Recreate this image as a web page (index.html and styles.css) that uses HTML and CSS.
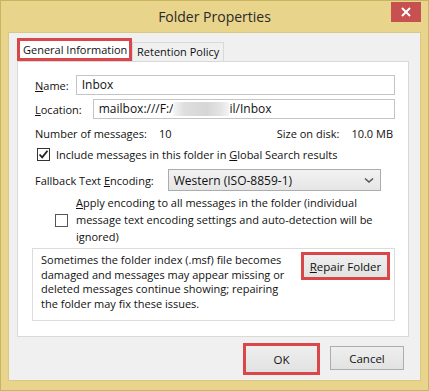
FILE: index.html
```html
<!DOCTYPE html>
<html>
<head>
<meta charset="utf-8">
<link rel="stylesheet" href="styles.css">
</head>
<body>
<div class="window">
  <div class="titlebar">
    <div class="title-spacer"></div>
    <div class="title">Folder Properties</div>
    <div class="close">
      <svg width="12" height="10" viewBox="0 0 12 10"><path d="M2 1 L10 9 M10 1 L2 9" stroke="#fff" stroke-width="2" fill="none"/></svg>
    </div>
  </div>
  <div class="client">
    <div class="tabs">
      <div class="tab tab-active">General Information</div>
      <div class="tab">Retention Policy</div>
    </div>
    <div class="panel">
      <div class="row field-row">
        <span class="label"><u>N</u>ame:</span>
        <div class="input input-name">Inbox</div>
      </div>
      <div class="row field-row loc-row">
        <span class="label"><u>L</u>ocation:</span>
        <div class="input input-loc">mailbox:///F:/<span class="blur"></span>il/Inbox</div>
      </div>
      <div class="row info-row">
        <span class="info-left">Number of messages:<span class="val">10</span></span>
        <span class="info-right">Size on disk:<span class="val">10.0 MB</span></span>
      </div>
      <div class="row check-row">
        <span class="check checked">
          <svg width="11" height="11" viewBox="0 0 11 11"><path d="M1.5 5.5 L4.2 8.3 L9.5 1.8" stroke="#222" stroke-width="1.8" fill="none"/></svg>
        </span>
        <span>Include messages in this folder in <u>G</u>lobal Search results</span>
      </div>
      <div class="row enc-row">
        <span class="label">Fallback Text <u>E</u>ncoding:</span>
        <div class="select">
          <span>Western (ISO-8859-1)</span>
          <svg width="10" height="7" viewBox="0 0 10 7"><path d="M1 1.5 L5 5 L9 1.5" stroke="#555" stroke-width="1.6" fill="none"/></svg>
        </div>
      </div>
      <div class="row apply-row">
        <span class="check"></span>
        <span class="apply-text"><u>A</u>pply encoding to all messages in the folder (individual message text encoding settings and auto-detection will be ignored)</span>
      </div>
      <div class="repair-box">
        <div class="repair-text">Sometimes the folder index (.msf) file becomes damaged and messages may appear missing or deleted messages continue showing; repairing the folder may fix these issues.</div>
        <div class="btn btn-repair marked"><u>R</u>epair Folder</div>
      </div>
    </div>
    <div class="buttons">
      <div class="btn btn-ok marked">OK</div>
      <div class="btn btn-cancel">Cancel</div>
    </div>
  </div>
</div>
</body>
</html>
```
FILE: styles.css
```css
* { box-sizing: border-box; }
html, body { margin: 0; padding: 0; }
body {
  width: 429px; height: 391px; overflow: hidden;
  font-family: "Open Sans", "Noto Sans", sans-serif;
  font-size: 11px;
  color: #111;
}
u { text-decoration: underline; text-underline-offset: 1px; }
.window {
  width: 429px; height: 391px;
  background: #e8d48a;
  border: 1px solid #c9b45f;
  display: flex; flex-direction: column;
}
.titlebar {
  height: 31px;
  display: grid;
  grid-template-columns: 1fr auto 1fr;
  align-items: start;
}
.title {
  font-size: 14px;
  color: #2a2a2a;
  padding-top: 6px;
}
.close {
  justify-self: end;
  margin-right: 7px;
  margin-top: 1px;
  width: 30px; height: 20px;
  background: #c75050;
  display: flex; align-items: center; justify-content: center;
}
.client {
  margin: 0 7px;
  height: 349px;
  background: #f0f0f0;
  border: 1px solid #d8c888;
  padding: 5px 11px 0 8px;
  display: flex; flex-direction: column;
}
.tabs { display: flex; align-items: flex-end; height: 23px; }
.tab {
  height: 19px;
  padding: 0 4px;
  line-height: 18px;
  border: 1px solid #d9d9d9;
  border-bottom: none;
  background: #f0f0f0;
  white-space: nowrap;
}
.tab-active {
  height: 23px;
  line-height: 22px;
  background: #fff;
  width: 115px;
  outline: 3px solid #d9474a;
  outline-offset: -3px;
  padding-left: 5px;
  position: relative;
  z-index: 1;
}
.panel {
  background: #fff;
  border: 1px solid #d9d9d9;
  height: 276px;
  padding: 13px 13px 0 17px;
  display: flex; flex-direction: column;
}
.row { display: flex; align-items: center; }
.field-row { height: 20px; }
.loc-row { margin-top: 4px; }
.label { margin-right: 7px; white-space: nowrap; }
.input {
  flex: 1;
  height: 20px;
  border: 1px solid #c4c4c4;
  background: #fff;
  padding-left: 5px;
  line-height: 18px;
  white-space: nowrap;
  overflow: hidden;
  font-size: 12px;
}
.input-loc { margin-left: 4px; }
.blur {
  display: inline-block;
  width: 56px; height: 14px;
  vertical-align: -3px;
  background: linear-gradient(90deg, #f6f6f6, #dedede 20%, #d6d6d6 60%, #e4e4e4 85%, #f4f4f4);
}
.info-row {
  height: 16px; margin-top: 6px;
  justify-content: space-between;
  padding-right: 2px;
}
.val { margin-left: 12px; }
.check-row { height: 16px; margin-top: 5px; margin-left: 2px; }
.check {
  width: 13px; height: 13px;
  border: 1px solid #333;
  background: #fff;
  display: inline-flex; align-items: center; justify-content: center;
  margin-right: 6px;
  flex: none;
}
.enc-row { height: 22px; margin-top: 7px; }
.enc-row .label { margin-right: 14px; }
.select {
  width: 213px; height: 22px;
  border: 1px solid #acacac;
  background: linear-gradient(#f2f2f2, #e6e6e6);
  display: flex; align-items: center; justify-content: space-between;
  padding: 0 6px 0 5px;
  font-size: 12px;
}
.apply-row { margin-top: 3px; margin-left: 20px; align-items: center; }
.apply-row .check { border-color: #555; margin-right: 8px; margin-top: 2px; }
.apply-text { line-height: 17px; width: 305px; }
.repair-box {
  margin-top: 3px;
  margin-left: -3px;
  width: 363px;
  height: 73px;
  border: 1px solid #dcdcdc;
  display: flex; align-items: flex-start;
  padding: 4px 6px 0 8px;
  justify-content: space-between;
}
.repair-text { width: 250px; line-height: 14.7px; }
.btn {
  display: flex; align-items: center; justify-content: center;
  background: linear-gradient(#efefef, #e2e2e2);
  border: 1px solid #adadad;
  white-space: nowrap;
  font-size: 11.5px;
}
.marked { outline: 3px solid #d9474a; outline-offset: -1px; }
.btn-repair { width: 85px; height: 24px; margin-top: 1px; }
.buttons {
  display: flex; justify-content: flex-end;
  gap: 12px;
  margin-top: 8px;
  padding-right: 5px;
}
.btn-ok { width: 73px; height: 28px; }
.btn-cancel { width: 74px; height: 24px; margin-top: 1px; }
```
